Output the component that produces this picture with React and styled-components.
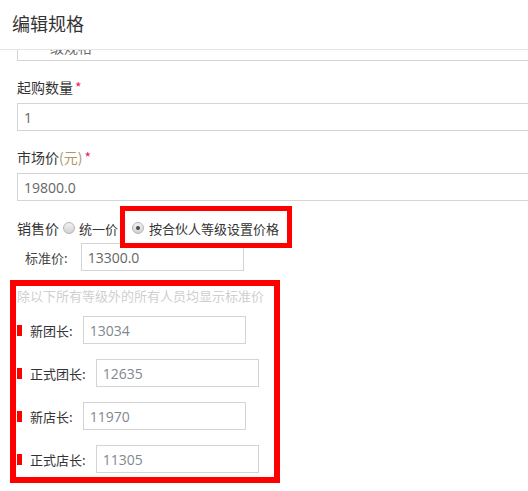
import React, { useRef, useLayoutEffect } from "react";
import styled, { createGlobalStyle } from "styled-components";

const GlobalStyle = createGlobalStyle`
  * {
    box-sizing: border-box;
  }
  body {
    margin: 0;
    background: #fff;
    font-family: "Noto Sans CJK SC", "Noto Sans", sans-serif;
    color: #333;
  }
`;

const Dialog = styled.div`
  width: 528px;
  height: 491px;
  display: flex;
  flex-direction: column;
  overflow: hidden;
`;

const Header = styled.div`
  height: 50px;
  flex-shrink: 0;
  padding: 8px 12px 0;
  border-bottom: 1px solid #e5e5e5;
`;

const Title = styled.h3`
  margin: 0;
  font-size: 18px;
  font-weight: normal;
  line-height: 30px;
  color: #333;
`;

const Body = styled.div`
  flex: 1;
  overflow: hidden;
`;

const Form = styled.div`
  padding: 0 0 40px 17px;
`;

const Group = styled.div`
  & + & {
    margin-top: 16px;
  }
`;

const Label = styled.div`
  font-size: 14px;
  line-height: 20px;
  margin-bottom: 6px;
  color: #333;
`;

const Unit = styled.span`
  color: #b39670;
`;

const Required = styled.span`
  color: #ee2255;
  margin-left: 2px;
`;

const Input = styled.input`
  display: block;
  width: ${(p) => p.$width || "620px"};
  height: 28px;
  padding: 0 6px;
  border: 1px solid #d4d4d4;
  border-radius: 0;
  outline: none;
  background: #fff;
  font-family: "Open Sans", "Noto Sans CJK SC", sans-serif;
  font-size: 14px;
  color: ${(p) => (p.$muted ? "#808890" : "#666")};
  text-indent: ${(p) => p.$indent || "0"};
`;

const RadioRow = styled.div`
  display: flex;
  align-items: center;
  height: 20px;
  margin-top: 17px;
  font-size: 13px;
  color: #333;
`;

const RadioLabel = styled.span`
  font-size: 14px;
  margin-right: 4px;
`;

const Option = styled.label`
  position: relative;
  display: inline-flex;
  align-items: center;
  gap: ${(p) => p.$gap || "4px"};
  margin-right: ${(p) => p.$space || "0"};
`;

const RadioDot = styled.span`
  position: relative;
  width: 12px;
  height: 12px;
  border-radius: 50%;
  border: 1px solid #b4b4b4;
  background: linear-gradient(#f2f2f2, #d2d2d2);
  &::after {
    content: "";
    display: ${(p) => (p.$checked ? "block" : "none")};
    position: absolute;
    left: 3px;
    top: 3px;
    width: 4px;
    height: 4px;
    border-radius: 50%;
    background: #4a4a4a;
  }
`;

const Highlight = styled.span`
  position: absolute;
  pointer-events: none;
  border: ${(p) => p.$border}px solid #ff0000;
`;

const StdRow = styled.div`
  display: flex;
  align-items: center;
  margin-top: 5px;
  padding-left: 8px;
  font-size: 13px;
  color: #444;
`;

const FieldName = styled.span`
  margin-right: ${(p) => p.$space || "10px"};
  white-space: nowrap;
`;

const TierSection = styled.div`
  position: relative;
  margin-top: 16px;
  width: 260px;
`;

const Note = styled.div`
  font-size: 13px;
  line-height: 18px;
  color: #cfcfcf;
  margin-bottom: 11px;
`;

const TierList = styled.div`
  display: flex;
  flex-direction: column;
  gap: 15px;
`;

const TierRow = styled.div`
  display: flex;
  align-items: center;
  height: 28px;
  font-size: 13px;
  color: #333;
`;

const Marker = styled.span`
  width: 5px;
  height: 11px;
  background: #ff0000;
  margin-right: 8px;
  flex-shrink: 0;
`;

const tiers = [
  { name: "新团长", price: "13034" },
  { name: "正式团长", price: "12635" },
  { name: "新店长", price: "11970" },
  { name: "正式店长", price: "11305" },
];

export default function App() {
  const bodyRef = useRef(null);

  // the form is shown scrolled a little past its first field
  useLayoutEffect(() => {
    if (bodyRef.current) bodyRef.current.scrollTop = 17;
  }, []);

  return (
    <Dialog>
      <GlobalStyle />
      <Header>
        <Title>编辑规格</Title>
      </Header>
      <Body ref={bodyRef}>
        <Form>
          <Group>
            <Input readOnly value="一级规格" $indent="12px" />
          </Group>
          <Group>
            <Label>
              起购数量<Required>*</Required>
            </Label>
            <Input readOnly value="1" />
          </Group>
          <Group>
            <Label>
              市场价<Unit>(元)</Unit>
              <Required>*</Required>
            </Label>
            <Input readOnly value="19800.0" />
          </Group>

          <RadioRow>
            <RadioLabel>销售价</RadioLabel>
            <Option $space="14px">
              <RadioDot />
              统一价
            </Option>
            <Option $gap="5px">
              <RadioDot $checked />
              按合伙人等级设置价格
              <Highlight
                $border={5}
                style={{ left: -12, top: -13, width: 172, height: 42 }}
              />
            </Option>
          </RadioRow>

          <StdRow>
            <FieldName $space="13px">标准价:</FieldName>
            <Input readOnly value="13300.0" $width="163px" />
          </StdRow>

          <TierSection>
            <Note>除以下所有等级外的所有人员均显示标准价</Note>
            <TierList>
              {tiers.map((t) => (
                <TierRow key={t.name}>
                  <Marker />
                  <FieldName>{t.name}:</FieldName>
                  <Input readOnly value={t.price} $width="163px" $muted />
                </TierRow>
              ))}
            </TierList>
            <Highlight
              $border={6}
              style={{ left: -7, top: -7, width: 270, height: 203 }}
            />
          </TierSection>
        </Form>
      </Body>
    </Dialog>
  );
}
